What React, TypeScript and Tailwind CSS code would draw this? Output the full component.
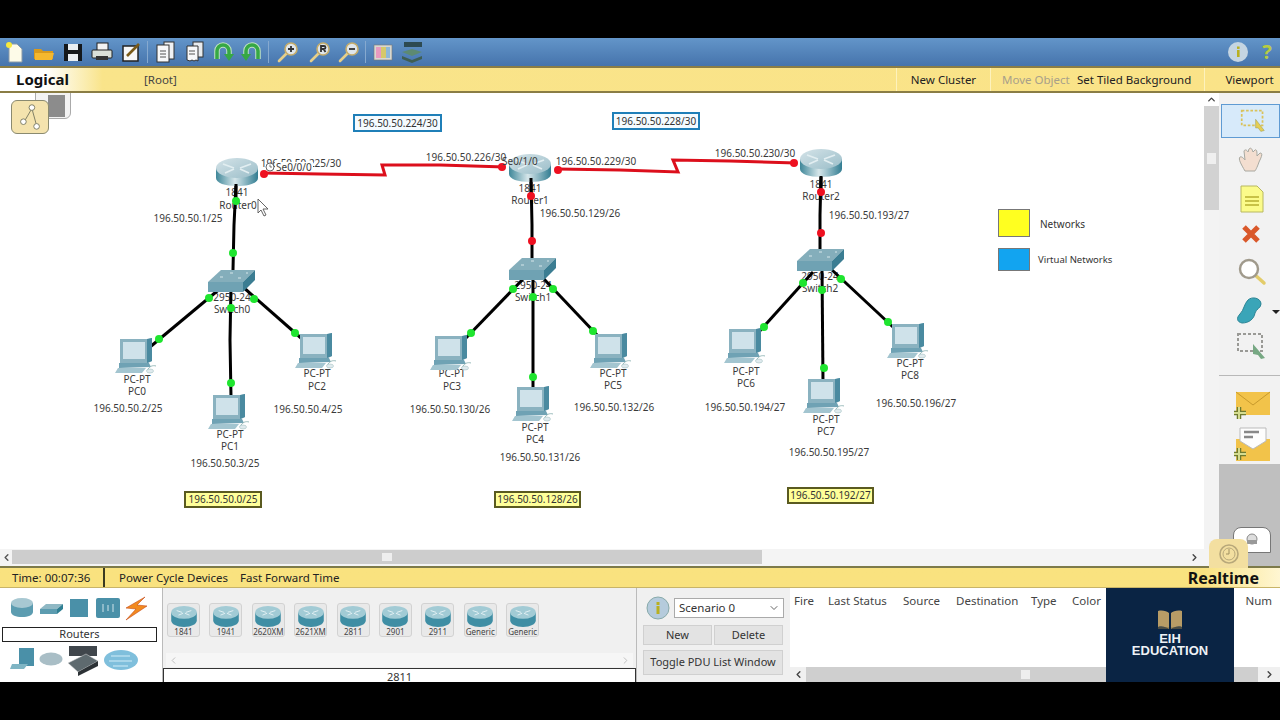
import { ReactNode } from "react";
import { ChevronDown, ChevronLeft, ChevronRight, ChevronUp } from "lucide-react";

const CANVAS_TOP = 93;

// diagram data, all in page coordinates
const routers = [[237, 158], [530, 154], [821, 149]];
const switches = [[208, 269], [509, 257], [797, 248]];
const pcs = [[115, 338], [208, 394], [295, 333], [430, 335], [512, 386], [590, 333], [724, 328], [803, 378], [887, 323]];

const blackCables = [
    "M236 184 L234 225 L233 270",
    "M222 287 L150 347",
    "M231 285 L230 340 L231 397",
    "M243 287 L301 338",
    "M531 178 L532 225 L532 258",
    "M524 278 L465 339",
    "M533 275 L533 390",
    "M543 278 L598 336",
    "M821 176 L820 215 L820 250",
    "M813 272 L757 334",
    "M822 268 L823 382",
    "M832 270 L893 327",
];
const redCables = [
    "M263 173 L320 174 L385 175 L382 165 L440 165 L505 167",
    "M557 169 L620 170 L678 172 L673 160 L730 161 L796 163",
];
const greenDots = [[236, 201], [233, 253], [209, 298], [159, 339], [231, 308], [231, 383], [254, 299], [295, 333], [513, 289], [553, 289], [533, 297], [471, 333], [533, 377], [593, 331], [803, 283], [841, 279], [822, 290], [764, 327], [824, 368], [888, 322]];
const redDots = [[264, 174], [502, 167], [558, 170], [794, 163], [531, 196], [532, 241], [821, 192], [821, 233]];

const labels: [string, number, number][] = [
    ["1841", 237, 192], ["Router0", 238, 205], ["1841", 530, 188], ["Router1", 530, 200], ["1841", 821, 184], ["Router2", 821, 196],
    ["2950-24", 232, 297], ["Switch0", 232, 309], ["2950-24", 533, 285], ["Switch1", 533, 297], ["2950-24", 820, 276], ["Switch2", 820, 288],
    ["PC-PT", 137, 379], ["PC0", 137, 391], ["PC-PT", 230, 434], ["PC1", 230, 446], ["PC-PT", 317, 373], ["PC2", 317, 386],
    ["PC-PT", 452, 373], ["PC3", 452, 386], ["PC-PT", 535, 427], ["PC4", 535, 439], ["PC-PT", 613, 373], ["PC5", 613, 385],
    ["PC-PT", 746, 371], ["PC6", 746, 383], ["PC-PT", 826, 419], ["PC7", 826, 431], ["PC-PT", 910, 363], ["PC8", 910, 375],
    ["196.50.50.1/25", 188, 218], ["196.50.50.2/25", 128, 408], ["196.50.50.3/25", 225, 463], ["196.50.50.4/25", 308, 409],
    ["196.50.50.130/26", 450, 409], ["196.50.50.131/26", 540, 457], ["196.50.50.132/26", 614, 407],
    ["196.50.50.194/27", 745, 407], ["196.50.50.195/27", 829, 452], ["196.50.50.196/27", 916, 403],
    ["196.50.50.129/26", 580, 213], ["196.50.50.193/27", 869, 215],
    ["196.50.50.225/30", 301, 163], ["196.50.50.226/30", 466, 157], ["196.50.50.229/30", 596, 161], ["196.50.50.230/30", 755, 153],
];

const noteBoxes: [string, number, number, number, number, boolean][] = [
    ["196.50.50.224/30", 353, 114, 89, 18, true],
    ["196.50.50.228/30", 612, 112, 88, 18, true],
    ["196.50.50.0/25", 184, 491, 78, 17, false],
    ["196.50.50.128/26", 494, 491, 87, 17, false],
    ["196.50.50.192/27", 787, 487, 87, 17, false],
];

const tileNames = ["1841", "1941", "2620XM", "2621XM", "2811", "2901", "2911", "Generic", "Generic"];

const RouterShape = ({ x, y }: { x: number; y: number }) => (
    <g transform={`translate(${x - 21} ${y})`}>
        <path d="M0 10 V20 C0 25 9 28 21 28 C33 28 42 25 42 20 V10 Z" fill="url(#routerSide)" />
        <ellipse cx="21" cy="10" rx="21" ry="10" fill="url(#routerTop)" />
        <path d="M7 6 L18 10 M35 6 L24 10 M9 15 L18 11 M33 15 L24 11" stroke="#e2eef1" strokeWidth="1.8" />
    </g>
);

const SwitchShape = ({ x, y }: { x: number; y: number }) => (
    <g transform={`translate(${x} ${y})`}>
        <polygon points="0,13 13,1 47,1 35,13" fill="#84aebb" />
        <rect x="0" y="13" width="35" height="10" fill="#6fa2b3" />
        <polygon points="35,13 47,1 47,11 35,23" fill="#3b7d92" />
        <path d="M12 8 h3 M22 4 h3 M30 9 h3 M38 4 h2" stroke="#d5e6ea" strokeWidth="1" />
    </g>
);

const PcShape = ({ x, y }: { x: number; y: number }) => (
    <g transform={`translate(${x} ${y})`}>
        <polygon points="5,1 33,1 37,0 37,23 33,25 5,25" fill="#8ab2c0" />
        <polygon points="32,1 37,0 37,23 32,25" fill="#4a8aa0" />
        <rect x="8" y="4" width="22" height="17" fill="#cfe2ea" />
        <polygon points="4,25 34,25 36,29 4,30" fill="#6fa2b4" />
        <polygon points="3,30 31,30 27,35 0,35" fill="#a3c5d0" />
        <path d="M32 33 C34 28 38 27 41 28" stroke="#9bb" fill="none" />
        <ellipse cx="35" cy="33" rx="3.5" ry="2" fill="#dfeaee" stroke="#9bb" strokeWidth=".5" />
    </g>
);

const DiagramDefs = () => (
    <defs>
        <linearGradient id="routerSide" x1="0" x2="1" y1="0" y2="0">
            <stop offset="0" stopColor="#3f8799" />
            <stop offset=".45" stopColor="#d6e6ea" />
            <stop offset="1" stopColor="#327d92" />
        </linearGradient>
        <linearGradient id="routerTop" x1="0" x2="1" y1="0" y2="1">
            <stop offset="0" stopColor="#d4e3e8" />
            <stop offset="1" stopColor="#9bbec9" />
        </linearGradient>
    </defs>
);

const Diagram = () => (
    <svg className="absolute inset-0 w-full h-full" viewBox={`0 ${CANVAS_TOP} 1204 456`}>
        <DiagramDefs />
        {blackCables.map((d) => <path key={d} d={d} stroke="#000" strokeWidth="3" fill="none" />)}
        {redCables.map((d) => <path key={d} d={d} stroke="#dc0f1c" strokeWidth="3" fill="none" />)}
        {routers.map(([x, y]) => <RouterShape key={x} x={x} y={y} />)}
        {switches.map(([x, y]) => <SwitchShape key={x} x={x} y={y} />)}
        {pcs.map(([x, y]) => <PcShape key={x} x={x} y={y} />)}
        <path d="M236 184 L236 200 M531 178 L531 196 M821 176 L821 192" stroke="#000" strokeWidth="3" />
        {greenDots.map(([x, y]) => <circle key={`${x}-${y}`} cx={x} cy={y} r="4" fill="#1fe52f" />)}
        {redDots.map(([x, y]) => <circle key={`${x}-${y}`} cx={x} cy={y} r="4" fill="#ee1020" />)}
        {/* clock on the DCE end of the serial link */}
        <circle cx="270" cy="167" r="4" fill="#fff" stroke="#555" strokeWidth=".9" />
        <path d="M270 164.5 V167 H272" stroke="#555" strokeWidth=".8" fill="none" />
        {/* mouse pointer */}
        <path d="M258 199 V213 L261 210 L264 216 L266 215 L263 209 L268 209 Z" fill="#fff" stroke="#555" strokeWidth=".9" />
    </svg>
);

const ToolBtn = ({ children, w = "w-[29px]" }: { children: ReactNode; w?: string }) => (
    <div className={`${w} h-full flex items-center justify-center`}>
        <svg width="24" height="24" viewBox="0 0 24 24">{children}</svg>
    </div>
);

const ToolSep = () => <div className="w-px h-[22px] mx-[2px] bg-[#86a9cf]" />;

const Magnifier = ({ sign }: { sign: string }) => (
    <>
        <path d="M11 13 L3 21" stroke="#e6cf8a" strokeWidth="2.6" strokeLinecap="round" />
        <circle cx="15" cy="9" r="6" fill="#dfe6ec" stroke="#c6ad6a" strokeWidth="1.6" />
        <path d={sign} stroke="#333" strokeWidth="1.8" fill="none" />
    </>
);

const Toolbar = () => (
    <div className="h-[30px] flex items-center bg-gradient-to-b from-[#6395c9] to-[#4674ac] border-b-2 border-[#8a7d45] shrink-0">
        <ToolBtn>
            <path d="M6 4 H14 L19 9 V22 H6 Z" fill="#fdfbe8" stroke="#8a9aa8" />
            <circle cx="6" cy="5" r="3" fill="#f7e93c" />
        </ToolBtn>
        <ToolBtn>
            <path d="M2 9 H9 L11 11 H21 V19 H2 Z" fill="#d99a1c" />
            <path d="M3 13 H22 L20 20 H3 Z" fill="#f5b82e" />
        </ToolBtn>
        <ToolBtn>
            <rect x="3" y="4" width="18" height="17" fill="#14181c" />
            <rect x="7" y="4" width="10" height="6" fill="#e8eef2" />
            <rect x="7" y="14" width="10" height="7" fill="#e8eef2" />
        </ToolBtn>
        <ToolBtn>
            <rect x="7" y="3" width="11" height="8" fill="#f3f3f3" stroke="#222" />
            <rect x="2" y="10" width="20" height="8" rx="1" fill="#dadfd8" stroke="#222" />
            <rect x="6" y="16" width="12" height="4" fill="#333" />
        </ToolBtn>
        <ToolBtn>
            <rect x="4" y="6" width="15" height="15" fill="#f7f7f7" stroke="#222" strokeWidth="1.5" />
            <path d="M8 16 L20 4" stroke="#7a5a18" strokeWidth="2.6" />
        </ToolBtn>
        <ToolSep />
        <ToolBtn>
            <rect x="11" y="2" width="10" height="17" fill="#f0f2f4" stroke="#333" />
            <rect x="4" y="5" width="12" height="17" fill="#f7f8f9" stroke="#333" />
            <path d="M7 11 h6 M7 14 h6 M7 17 h6" stroke="#555" />
        </ToolBtn>
        <ToolBtn>
            <rect x="11" y="2" width="10" height="15" fill="#e8ebee" stroke="#333" />
            <path d="M5 6 H16 V21 L14 20 L12 21 L10 20 L8 21 L5 20 Z" fill="#f7f8f9" stroke="#333" />
            <path d="M7 11 h6 M7 14 h6" stroke="#555" />
        </ToolBtn>
        <ToolBtn>
            <path d="M6 19 V11 A6 6 0 0 1 18 11 V14" stroke="#bfe3c2" strokeWidth="5.5" fill="none" />
            <path d="M6 19 V11 A6 6 0 0 1 18 11 V14" stroke="#36a844" strokeWidth="3.5" fill="none" />
            <path d="M13 14 L18 21 L23 14 Z" fill="#36a844" />
        </ToolBtn>
        <ToolBtn>
            <path d="M18 19 V11 A6 6 0 0 0 6 11 V14" stroke="#bfe3c2" strokeWidth="5.5" fill="none" />
            <path d="M18 19 V11 A6 6 0 0 0 6 11 V14" stroke="#36a844" strokeWidth="3.5" fill="none" />
            <path d="M1 14 L6 21 L11 14 Z" fill="#36a844" />
        </ToolBtn>
        <ToolSep />
        <ToolBtn w="w-[34px]"><Magnifier sign="M12 9 h6 M15 6 v6" /></ToolBtn>
        <ToolBtn><Magnifier sign="M13 12 V6 h3 a1.5 1.5 0 0 1 0 3 h-3 M15.5 9 L17.5 12" /></ToolBtn>
        <ToolBtn><Magnifier sign="M12 9 h6" /></ToolBtn>
        <ToolSep />
        <ToolBtn>
            <rect x="3" y="5" width="18" height="15" fill="#d8d8d0" stroke="#777" strokeWidth=".6" />
            <rect x="5" y="7" width="5" height="11" fill="#e79ac0" />
            <rect x="10" y="7" width="5" height="11" fill="#d6c86a" />
            <rect x="15" y="7" width="4" height="11" fill="#8fb8d8" />
        </ToolBtn>
        <ToolBtn>
            <rect x="4" y="2" width="18" height="5" fill="#2d4a52" />
            <path d="M2 12 L12 9 L22 12 L12 16 Z" fill="#5d8a72" />
            <path d="M2 16 L12 20 L22 16 V19 L12 23 L2 19 Z" fill="#3e5e52" />
        </ToolBtn>
        <div className="flex-1" />
        <svg width="22" height="22" viewBox="0 0 22 22" className="mr-[7px]">
            <circle cx="11" cy="11" r="10" fill="#c5d5e2" />
            <rect x="10" y="9" width="2.6" height="7" fill="#b9b020" />
            <rect x="10" y="5.5" width="2.6" height="2.4" fill="#b9b020" />
        </svg>
        <span className="w-[22px] mr-[2px] text-center text-[20px] font-bold text-[#b7cc42] leading-none">?</span>
    </div>
);

const TopBar = () => (
    <div className="h-[25px] flex items-center bg-gradient-to-r from-white from-[3.5%] via-[#f9e48a] via-[8%] to-[#fae388] border-b-2 border-[#8a7d45] shrink-0 text-[11.5px] text-[#222]">
        <span className="ml-[16px] w-[128px] text-[15px] font-bold leading-none text-[#111]">Logical</span>
        <span className="text-[#444]">[Root]</span>
        <div className="flex-1" />
        <div className="h-full w-[94px] flex items-center justify-center border-l border-[#fdf2bd]">New Cluster</div>
        <div className="h-full pl-[11px] w-[87px] flex items-center border-l border-[#fdf2bd] text-[#a8a08a] whitespace-nowrap">Move Object</div>
        <div className="w-[127px] whitespace-nowrap">Set Tiled Background</div>
        <div className="h-full w-[76px] pl-[14px] flex items-center justify-center border-l border-[#fdf2bd]">Viewport</div>
    </div>
);

const LogicalTile = () => (
    <div className="absolute left-[11px] top-[-1px] w-[60px] h-[44px]">
        <div className="absolute left-[24px] top-0 w-[36px] h-[27px] bg-[#f3f3f3] border border-[#aaa] rounded-br-md flex items-center justify-start pl-[12px]">
            <div className="w-[17px] h-[22px] bg-[#8c8c8c]" />
        </div>
        <div className="absolute left-0 top-[8px] w-[38px] h-[34px] rounded-md bg-[#f4e3ae] border border-[#8a8a70]">
            <svg viewBox="0 0 38 34" className="w-full h-full">
                <path d="M14 20 L21 8 L26 26" stroke="#7a7a60" fill="none" />
                <circle cx="21" cy="7" r="3" fill="#fff" stroke="#7a7a60" />
                <circle cx="12" cy="22" r="3" fill="#fff" stroke="#7a7a60" />
                <circle cx="26" cy="27" r="3" fill="#fff" stroke="#7a7a60" />
            </svg>
        </div>
    </div>
);

const Canvas = () => (
    <div className="relative w-[1204px] h-full bg-white overflow-hidden">
        <LogicalTile />
        {labels.map(([text, x, y], i) => (
            <span key={i} className="absolute -translate-x-1/2 -translate-y-1/2 whitespace-nowrap leading-none text-[10px] text-[#3a3a3a]" style={{ left: x, top: y - CANVAS_TOP }}>{text}</span>
        ))}
        {noteBoxes.map(([text, x, y, w, h, blue]) => (
            <div key={text} className={`absolute flex items-center justify-center whitespace-nowrap text-[10px] text-[#333] border-2 ${blue ? "bg-[#f5fbff] border-[#1f7fb8]" : "bg-[#ffff99] border-[#5a5a20]"}`} style={{ left: x, top: y - CANVAS_TOP, width: w, height: h }}>{text}</div>
        ))}
        <span className="absolute left-[275px] top-[69px] h-[11px] px-[1px] bg-white text-[10px] leading-[11px] text-[#3a3a3a]">Se0/0/0</span>
        <Diagram />
        <span className="absolute left-[502px] top-[63px] text-[10px] leading-none text-[#3a3a3a]">Se0/1/0</span>
        <div className="absolute left-[998px] top-[116px] w-[32px] h-[28px] bg-[#ffff20] border border-[#777]" />
        <span className="absolute left-[1040px] top-[126px] text-[10px] leading-none text-[#333]">Networks</span>
        <div className="absolute left-[998px] top-[155px] w-[32px] h-[23px] bg-[#12a4f0] border border-[#777]" />
        <span className="absolute left-[1038px] top-[162px] text-[9.5px] leading-none text-[#333] whitespace-nowrap">Virtual Networks</span>
    </div>
);

const VScroll = () => (
    <div className="w-[15px] h-full bg-[#f3f3f3] flex flex-col">
        <div className="h-[13px] flex items-center justify-center bg-white"><ChevronUp size={11} strokeWidth={3} color="#444" /></div>
        <div className="h-[104px] bg-[#d2d2d2] flex items-center justify-center"><div className="w-[9px] h-[11px] bg-[#efefef]" /></div>
    </div>
);

const HScroll = () => (
    <div className="h-[17px] flex items-center bg-[#f4f4f4] shrink-0 border-b border-[#f4f4f4]">
        <div className="w-[12px] flex justify-center"><ChevronLeft size={11} strokeWidth={3} color="#555" /></div>
        <div className="w-[750px] h-[14px] bg-[#cdcdcd] flex items-center justify-center"><div className="w-[10px] h-[8px] bg-[#eee]" /></div>
        <div className="flex-1" />
        <div className="w-[50px] flex justify-start pl-[20px]"><ChevronRight size={11} strokeWidth={3} color="#444" /></div>
    </div>
);

const ToolCell = ({ children, h, active }: { children: ReactNode; h: string; active?: boolean }) => (
    <div className={`${h} flex items-center justify-center pr-[13px] pl-[18px] ${active ? "bg-[#d7eafa] border border-[#5f9bd3] ml-[2px]" : ""}`}>
        <svg width="30" height="30" viewBox="0 0 30 30">{children}</svg>
    </div>
);

const MailCell = ({ children, h }: { children: ReactNode; h: string }) => (
    <div className={`${h} flex items-center justify-center pr-[9px] pl-[14px]`}>
        <svg width="38" height="36" viewBox="0 0 38 36">{children}</svg>
    </div>
);

const Sidebar = () => (
    <div className="relative w-[61px] h-full bg-[#f2f2f2] flex flex-col pt-[11px]">
        <ToolCell active h="h-[34px]">
            <rect x="2" y="3" width="24" height="17" fill="none" stroke="#d9c25a" strokeWidth="2" strokeDasharray="3 2" />
            <path d="M18 13 L28 26 L24 27 L21 23 L18 23 Z" fill="#e5cf55" stroke="#8f8f50" strokeWidth=".5" />
        </ToolCell>
        <ToolCell h="h-[42px]">
            <path d="M8 27 C4 20 1 15 3 13 C5 12 7 15 8 16 L7 7 C8 5 10 6 11 8 L12 5 C14 3 15 5 16 8 L18 6 C20 5 20 8 20 12 L23 9 C26 9 25 12 22 18 C20 24 18 27 18 27 Z" fill="#f3ded0" stroke="#a8a8a0" />
        </ToolCell>
        <ToolCell h="h-[38px]">
            <path d="M4 2 H20 L26 8 V28 H4 Z" fill="#fbfb8a" stroke="#b8b860" />
            <path d="M8 13 H22 M8 17 H22 M8 21 H22" stroke="#b8b030" strokeWidth="1.6" />
        </ToolCell>
        <ToolCell h="h-[32px]">
            <path d="M7 8 L21 22 M21 8 L7 22" stroke="#d9582a" strokeWidth="5" />
        </ToolCell>
        <ToolCell h="h-[44px]">
            <path d="M17 17 L27 26" stroke="#e3cc6a" strokeWidth="3.5" strokeLinecap="round" />
            <circle cx="12" cy="12" r="9" fill="#fff" stroke="#a09a8c" strokeWidth="2.4" />
        </ToolCell>
        <ToolCell h="h-[34px]">
            <path d="M11 4 C15 0 24 2 24 8 C24 12 19 13 18 17 C17 23 12 27 5 27 C0 26 -1 22 3 18 C7 14 7 8 11 4 Z" fill="#3aa5b8" stroke="#2b8595" />
        </ToolCell>
        <ToolCell h="h-[36px]">
            <rect x="1" y="3" width="24" height="17" fill="none" stroke="#9a9a96" strokeWidth="2" strokeDasharray="3 2" />
            <path d="M16 13 L28 27 L24 28 L21 24 L16 23 Z" fill="#77a883" />
        </ToolCell>
        <div className="mt-[11px] border-t border-[#b8b8b8] pt-[6px]">
            <MailCell h="h-[44px]">
                <rect x="3" y="6" width="34" height="23" fill="#f2c34a" />
                <path d="M3 6 L20 19 L37 6" fill="none" stroke="#c79a2c" />
                <path d="M6 21 V33 M1 27 H13" stroke="#6e7a30" strokeWidth="4.5" />
                <path d="M6 21 V33 M1 27 H13" stroke="#d5dc90" strokeWidth="2" />
            </MailCell>
            <MailCell h="h-[38px]">
                <rect x="3" y="12" width="34" height="22" fill="#f2c34a" />
                <path d="M7 1 H33 V14 L20 22 L7 14 Z" fill="#fdfdfd" stroke="#bbb" />
                <path d="M11 5 H26 M11 10 H20" stroke="#888" strokeWidth="2.5" />
                <path d="M6 21 V33 M1 27 H13" stroke="#6e7a30" strokeWidth="4.5" />
                <path d="M6 21 V33 M1 27 H13" stroke="#d5dc90" strokeWidth="2" />
            </MailCell>
        </div>
        <div className="absolute right-0 top-[217px] w-0 h-0 border-x-[4px] border-x-transparent border-t-[4px] border-t-[#222]" />
        <div className="flex-1 bg-[#bfbfbf] relative">
            <div className="absolute left-[14px] bottom-[13px] w-[38px] h-[26px] bg-white border border-[#777] rounded-t-lg flex items-start justify-center pt-[4px]">
                <svg width="20" height="20" viewBox="0 0 20 20">
                    <circle cx="10" cy="7" r="5" fill="#ddd" stroke="#888" />
                    <rect x="5" y="8" width="10" height="4" fill="#999" />
                </svg>
            </div>
        </div>
    </div>
);

const RealtimeTile = () => (
    <div className="absolute left-[1209px] top-[-29px] w-[39px] h-[29px] rounded-t-lg bg-[#f3dfa0] flex items-center justify-center">
        <svg width="22" height="22" viewBox="0 0 22 22">
            <circle cx="11" cy="11" r="9" fill="none" stroke="#b8a87a" strokeWidth="1.6" />
            <circle cx="11" cy="11" r="6" fill="none" stroke="#b8a87a" />
            <path d="M11 6 V11 H8" stroke="#a09060" fill="none" />
        </svg>
    </div>
);

const TimeBar = () => (
    <div className="relative h-[22px] flex items-center bg-gradient-to-r from-[#f9e27f] via-[#f9e27f] via-[94%] to-[#fff6d2] border-t-2 border-[#7d7a4a] border-b border-b-[#c8b468] shrink-0 text-[11.5px] text-[#222]">
        <RealtimeTile />
        <span className="ml-[12px] w-[93px] h-full flex items-center border-r-2 border-[#3a3a20] whitespace-nowrap">Time: 00:07:36</span>
        <span className="ml-[14px] whitespace-nowrap">Power Cycle Devices</span>
        <span className="ml-[12px] whitespace-nowrap">Fast Forward Time</span>
        <div className="flex-1" />
        <span className="mr-[21px] text-[16px] font-bold text-[#111] whitespace-nowrap">Realtime</span>
    </div>
);

const DevicePanel = () => (
    <div className="w-[162px] bg-white flex flex-col pt-[7px]">
        {/* device type icons, top row */}
        <svg width="160" height="28" viewBox="0 0 160 28">
            <path d="M11 8 V17 C11 20 16 22 22 22 C28 22 33 20 33 17 V8 Z" fill="#5c9cb0" />
            <ellipse cx="22" cy="8" rx="11" ry="5" fill="#a8c8d2" />
            <polygon points="40,14 46,9 63,9 57,14" fill="#8fb8c4" />
            <polygon points="40,14 57,14 57,19 40,19" fill="#5c9cb0" />
            <polygon points="57,14 63,9 63,14 57,19" fill="#2f7f93" />
            <rect x="70" y="4" width="18" height="18" fill="#4a90a8" />
            <rect x="96" y="3" width="24" height="20" rx="2" fill="#4a90a8" />
            <path d="M103 9 V17 M108 10 V16 M113 9 V17" stroke="#cfe3ea" />
            <path d="M145 2 L126 13 L136 14 L126 25 L147 11 L137 10 Z" fill="#f28a1e" stroke="#c54a1a" strokeWidth=".6" />
        </svg>
        <div className="mt-[4px] ml-[2px] w-[155px] h-[15px] border-[1.5px] border-[#222] flex items-center justify-center text-[11px] text-[#333]">Routers</div>
        {/* device type icons, bottom row */}
        <svg width="160" height="34" viewBox="0 0 160 34" className="mt-[4px]">
            <rect x="19" y="2" width="15" height="18" fill="#4a90a8" />
            <polygon points="12,18 28,18 24,23 10,23" fill="#7fb5c4" />
            <ellipse cx="51" cy="13" rx="11.5" ry="6.5" fill="#a9bec6" />
            <rect x="69" y="0" width="28" height="10" fill="#40464c" />
            <polygon points="68,17 86,8 98,15 78,26" fill="#5e6a6f" stroke="#ddd" strokeWidth=".5" />
            <polygon points="78,26 98,15 98,20 78,30" fill="#2c3236" />
            <ellipse cx="121" cy="14" rx="17" ry="10" fill="#7fbfdc" />
            <path d="M111 10 H130 M109 15 H132 M113 20 H128" stroke="#a8d6ea" strokeWidth="2" />
        </svg>
    </div>
);

const DeviceTile = ({ name }: { name: string }) => (
    <div className="w-[33px] h-[34px] rounded-[3px] border border-[#d2d2d2] bg-[#e9e9e9] flex flex-col items-center pt-[2px]">
        <svg width="30" height="23" viewBox="0 0 30 23">
            <path d="M1 7 V16 C1 20 7 23 15 23 C23 23 29 20 29 16 V7 Z" fill="#3f8ea4" />
            <ellipse cx="15" cy="7" rx="14" ry="7" fill="#a2cbd5" />
            <path d="M7 5 L13 7 M23 5 L17 7 M9 10 L14 8 M21 10 L16 8" stroke="#e6f2f5" />
        </svg>
        <span className="text-[8px] leading-[9px] text-[#444] whitespace-nowrap">{name}</span>
    </div>
);

const DeviceList = () => (
    <div className="w-[474px] bg-[#f0f0f0] flex flex-col border-l border-[#bbb]">
        <div className="flex-1 pt-[15px] pl-[4px] flex gap-[9.4px]">
            {tileNames.map((n, i) => <DeviceTile key={i} name={n} />)}
        </div>
        <div className="h-[14px] mb-[1px] mx-[3px] bg-[#f6f6f6] flex items-center justify-between px-[2px]">
            <ChevronLeft size={11} color="#bbb" />
            <ChevronRight size={11} color="#bbb" />
        </div>
        <div className="h-[14px] bg-white border-t-[1.5px] border-x border-[#333] text-[11px] leading-[15px] text-center text-[#333]">2811</div>
    </div>
);

const ScenarioPanel = () => (
    <div className="w-[154px] bg-[#f0f0f0] px-[6px] pt-[8px] border-l border-[#bbb] text-[11px] text-[#333]">
        <div className="flex items-center gap-[4px]">
            <svg width="24" height="24" viewBox="0 0 24 24" className="ml-[3px] shrink-0">
                <circle cx="12" cy="12" r="11" fill="#b5cbdc" stroke="#8aa" />
                <rect x="10.5" y="10" width="3" height="8" fill="#b9b020" />
                <rect x="10.5" y="6" width="3" height="3" fill="#b9b020" />
            </svg>
            <div className="w-[112px] h-[20px] bg-white border border-[#aaa] flex items-center justify-between pl-[4px] pr-[3px] text-[11.5px]">
                Scenario 0
                <ChevronDown size={12} color="#666" />
            </div>
        </div>
        <div className="mt-[5px] flex gap-[2px]">
            <div className="w-[69px] h-[20px] bg-[#e3e3e3] border border-[#d0d0d0] flex items-center justify-center">New</div>
            <div className="w-[69px] h-[20px] bg-[#e3e3e3] border border-[#d0d0d0] flex items-center justify-center">Delete</div>
        </div>
        <div className="mt-[5px] w-[140px] h-[25px] bg-[#e3e3e3] border border-[#d0d0d0] flex items-center justify-center whitespace-nowrap">Toggle PDU List Window</div>
    </div>
);

const PduHead = ({ name, w }: { name: string; w: string }) => <span className={`${w} whitespace-nowrap`}>{name}</span>;

const PduTable = () => (
    <div className="relative flex-1 bg-white flex flex-col text-[11.5px] text-[#444]">
        <div className="h-[22px] flex items-center pl-[4px] pt-[3px]">
            <PduHead name="Fire" w="w-[34px]" />
            <PduHead name="Last Status" w="w-[75px]" />
            <PduHead name="Source" w="w-[53px]" />
            <PduHead name="Destination" w="w-[75px]" />
            <PduHead name="Type" w="w-[41px]" />
            <PduHead name="Color" w="w-[40px]" />
            <div className="flex-1" />
            <span className="mr-[8px]">Num</span>
        </div>
        <div className="flex-1" />
        <div className="h-[15px] flex items-center bg-[#f0f0f0]">
            <div className="w-[16px] flex justify-center"><ChevronLeft size={11} strokeWidth={3} color="#444" /></div>
            <div className="flex-1 h-full bg-[#cfcfcf] flex items-center justify-center"><div className="w-[9px] h-[9px] bg-[#eee] -ml-[14px]" /></div>
            <div className="w-[22px] flex justify-center"><ChevronRight size={11} strokeWidth={3} color="#444" /></div>
        </div>
        {/* watermark over the table */}
        <div className="absolute left-[316px] top-0 w-[128px] h-full bg-[#0a2444] flex flex-col items-center pt-[22px]">
            <svg width="26" height="20" viewBox="0 0 26 20">
                <path d="M1 1 C5 0 10 1 12 3 V19 C10 17 5 16 1 17 Z" fill="#b89c66" />
                <path d="M25 1 C21 0 16 1 14 3 V19 C16 17 21 16 25 17 Z" fill="#b89c66" />
                <path d="M1 18 H12 M14 18 H25" stroke="#8a7444" />
            </svg>
            <span className="mt-[3px] text-[13px] leading-[12px] font-bold text-[#eef2f6] [font-family:'Liberation_Sans',sans-serif]">EIH</span>
            <span className="text-[13px] leading-[11px] font-bold text-[#eef2f6] [font-family:'Liberation_Sans',sans-serif]">EDUCATION</span>
        </div>
    </div>
);

export default function App() {
    return (
        <div className="w-[1280px] h-[720px] bg-black flex flex-col overflow-hidden [font-family:'Noto_Sans',sans-serif]">
            <div className="h-[38px] shrink-0" />
            <Toolbar />
            <TopBar />
            <div className="h-[473px] flex shrink-0">
                <div className="w-[1219px] flex flex-col">
                    <div className="flex flex-1 min-h-0">
                        <Canvas />
                        <VScroll />
                    </div>
                    <HScroll />
                </div>
                <Sidebar />
            </div>
            <TimeBar />
            <div className="h-[94px] flex shrink-0">
                <DevicePanel />
                <DeviceList />
                <ScenarioPanel />
                <PduTable />
            </div>
            <div className="flex-1 bg-black" />
        </div>
    );
}
